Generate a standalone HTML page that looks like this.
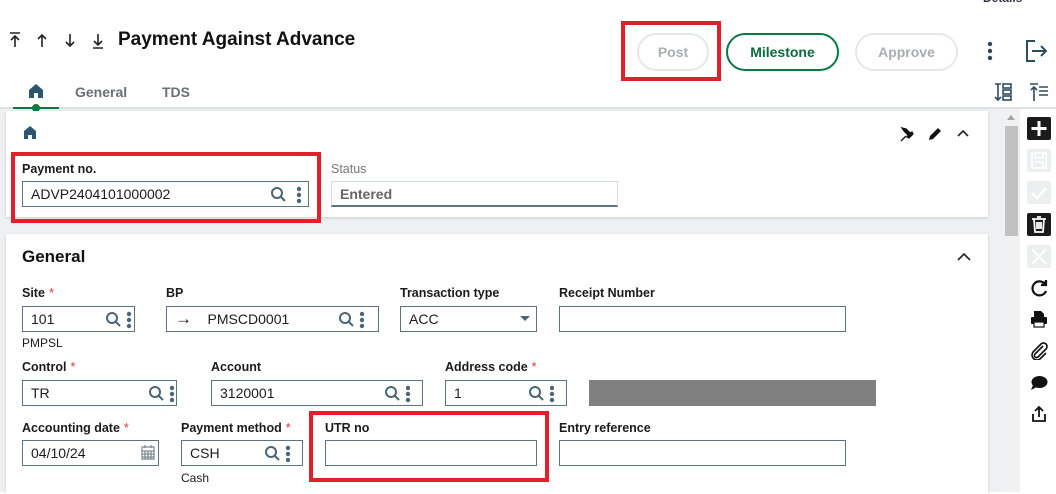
<!DOCTYPE html>
<html><head><meta charset="utf-8"><style>
*{margin:0;padding:0;box-sizing:border-box}
body{width:1056px;height:492px;overflow:hidden;position:relative;background:#fff;font-family:"Liberation Sans",sans-serif;color:#1b1b1b}
.a{position:absolute}
.lbl{position:absolute;font-size:12.5px;font-weight:bold;color:#1b1b1b;white-space:nowrap}
.lbl .s{color:#e0323c;font-weight:normal;margin-left:4px}
.inp{position:absolute;height:26px;border:1px solid #5b7383;background:#fff;font-size:14px;line-height:24px;padding-left:8px;color:#1b1b1b}
.ic{position:absolute;top:4px}
.red{position:absolute;border:4px solid #e3202a}
.btn{position:absolute;top:33px;height:38px;border-radius:19px;border:2px solid #e4e8eb;font-size:14px;font-weight:bold;color:#a9adb0;text-align:center;line-height:34px;background:#fff}
.tb{position:absolute;left:1027px;width:24px;height:23px;border-radius:2px}
</style></head><body>
<div class="a" style="left:0;top:109px;width:1020px;height:383px;background:#eef1f3"></div>
<div class="a" style="left:0;top:107px;width:1056px;height:2px;background:#dde1e4"></div>
<div class="a" style="left:983px;top:-9px;font-size:12px;font-weight:bold;color:#334">Details</div>
<svg class="a" style="left:8px;top:31px" width="100" height="18" fill="none" stroke="#222" stroke-width="1.6">
<path d="M2 2h10M7 16V5M3 9l4-4 4 4"/>
<path d="M34 16V4M30 8l4-4 4 4"/>
<path d="M62 3v12M58 11l4 4 4-4"/>
<path d="M90 3v11M86 10l4 4 4-4M85 17h10"/>
</svg>
<div class="a" style="left:118px;top:29px;font-size:19px;font-weight:bold;color:#111">Payment Against Advance</div>
<div class="btn" style="left:637px;width:72px">Post</div>
<div class="btn" style="left:726px;width:113px;border-color:#0a7a45;color:#0a6b3c">Milestone</div>
<div class="btn" style="left:855px;width:103px">Approve</div>
<div class="red" style="left:621px;top:21px;width:100px;height:60px"></div>
<svg class="a" style="left:986px;top:41px" width="8" height="20" fill="#2e4755"><circle cx="4" cy="3" r="2.2"/><circle cx="4" cy="10" r="2.2"/><circle cx="4" cy="17" r="2.2"/></svg>
<svg class="a" style="left:1024px;top:39px" width="24" height="24" fill="none" stroke="#2e4d5e" stroke-width="2"><path d="M11 2H3v20h8M8 12h14M17 7l5 5-5 5"/></svg>
<svg class="a" style="left:28px;top:83px" width="16" height="16" fill="#2e5570"><path d="M8 1L1 7v8h5v-5h4v5h5V7z"/></svg>
<div class="a" style="left:75px;top:84px;font-size:14px;font-weight:bold;color:#6b7076">General</div>
<div class="a" style="left:162px;top:84px;font-size:14px;font-weight:bold;color:#6b7076">TDS</div>
<div class="a" style="left:13px;top:107px;width:46px;height:2px;background:#0a7a45"></div>
<div class="a" style="left:32px;top:104px;width:8px;height:8px;border-radius:50%;background:#0a7a45"></div>
<svg class="a" style="left:993px;top:82px" width="20" height="20" fill="none" stroke="#2e4d5e" stroke-width="1.6"><path d="M2 2h6M5 2v16M2 15l3 3 3-3"/><rect x="10" y="2" width="8" height="4"/><rect x="10" y="8" width="8" height="4"/><rect x="10" y="14" width="8" height="4"/></svg>
<svg class="a" style="left:1029px;top:82px" width="20" height="20" fill="none" stroke="#2e4d5e" stroke-width="1.6"><path d="M1 2h8M5 5v14M2 8l3-3 3 3M10 5h9M10 9h9M10 13h9"/></svg>
<div class="a" style="left:6px;top:111px;width:982px;height:106px;background:#fff;box-shadow:0 1px 3px rgba(0,0,0,.15)"></div>
<svg class="a" style="left:23px;top:125px" width="14" height="15" fill="#2e5570"><path d="M7 1L1 6v8h4v-4h4v4h4V6z"/></svg>
<svg class="a" style="left:899px;top:125px" width="80" height="18" fill="#111"><path d="M3 3l4 1 4 4 2-1 1 2-4 4-2-1 1-2-4-4zM7 11l-5 5" stroke="#111" stroke-width="1.3"/><path d="M30 15l1-4 8-8 3 3-8 8z"/><path d="M59 11l5-5 5 5" fill="none" stroke="#222" stroke-width="1.6"/></svg>
<div class="lbl" style="left:22px;top:162px">Payment no.</div>
<div class="inp" style="left:22px;top:181px;width:287px">ADVP2404101000002
<svg class="ic" style="left:247px" width="36" height="18" fill="none" stroke="#4a6575" stroke-width="2"><circle cx="7" cy="7" r="5"/><path d="M11 11l4 4"/><circle cx="29" cy="3" r="1.2" fill="#4a6575"/><circle cx="29" cy="9" r="1.2" fill="#4a6575"/><circle cx="29" cy="15" r="1.2" fill="#4a6575"/></svg></div>
<div class="red" style="left:11px;top:152px;width:310px;height:71px"></div>
<div class="lbl" style="left:331px;top:162px;color:#777;font-weight:normal">Status</div>
<div class="inp" style="left:331px;top:181px;width:287px;border-color:#d5dade;border-bottom:2px solid #5b7383;color:#666;font-weight:bold;font-size:14px">Entered</div>
<div class="a" style="left:6px;top:234px;width:982px;height:260px;background:#fff;box-shadow:0 1px 3px rgba(0,0,0,.15)"></div>
<div class="a" style="left:22px;top:247px;font-size:17px;font-weight:bold;color:#111">General</div>
<svg class="a" style="left:957px;top:252px" width="14" height="10" fill="none" stroke="#222" stroke-width="1.6"><path d="M1 8l6-6 6 6"/></svg>

<div class="lbl" style="left:22px;top:286px">Site<span class="s">*</span></div>
<div class="inp" style="left:22px;top:306px;width:113px">101<svg class="ic" style="left:82px" width="30" height="18" fill="none" stroke="#4a6575" stroke-width="2"><circle cx="7" cy="7" r="5"/><path d="M11 11l4 4"/><circle cx="24" cy="3" r="1.2" fill="#4a6575"/><circle cx="24" cy="9" r="1.2" fill="#4a6575"/><circle cx="24" cy="15" r="1.2" fill="#4a6575"/></svg></div>
<div class="a" style="left:22px;top:336px;font-size:12px">PMPSL</div>
<div class="lbl" style="left:166px;top:286px">BP</div>
<div class="inp" style="left:166px;top:306px;width:213px"><span style="font-size:17px">→</span>&nbsp;&nbsp;&nbsp; PMSCD0001<svg class="ic" style="left:171px" width="30" height="18" fill="none" stroke="#4a6575" stroke-width="2"><circle cx="7" cy="7" r="5"/><path d="M11 11l4 4"/><circle cx="24" cy="3" r="1.2" fill="#4a6575"/><circle cx="24" cy="9" r="1.2" fill="#4a6575"/><circle cx="24" cy="15" r="1.2" fill="#4a6575"/></svg></div>
<div class="lbl" style="left:400px;top:286px">Transaction type</div>
<div class="inp" style="left:400px;top:306px;width:137px">ACC<svg class="ic" style="left:119px;top:9px" width="10" height="6" fill="#4a6575"><path d="M0 0h10L5 5z"/></svg></div>
<div class="lbl" style="left:559px;top:286px">Receipt Number</div>
<div class="inp" style="left:559px;top:306px;width:287px"></div>

<div class="lbl" style="left:22px;top:360px">Control<span class="s">*</span></div>
<div class="inp" style="left:22px;top:380px;width:155px">TR<svg class="ic" style="left:125px" width="30" height="18" fill="none" stroke="#4a6575" stroke-width="2"><circle cx="7" cy="7" r="5"/><path d="M11 11l4 4"/><circle cx="24" cy="3" r="1.2" fill="#4a6575"/><circle cx="24" cy="9" r="1.2" fill="#4a6575"/><circle cx="24" cy="15" r="1.2" fill="#4a6575"/></svg></div>
<div class="lbl" style="left:211px;top:360px">Account</div>
<div class="inp" style="left:211px;top:380px;width:212px">3120001<svg class="ic" style="left:172px" width="30" height="18" fill="none" stroke="#4a6575" stroke-width="2"><circle cx="7" cy="7" r="5"/><path d="M11 11l4 4"/><circle cx="24" cy="3" r="1.2" fill="#4a6575"/><circle cx="24" cy="9" r="1.2" fill="#4a6575"/><circle cx="24" cy="15" r="1.2" fill="#4a6575"/></svg></div>
<div class="lbl" style="left:445px;top:360px">Address code<span class="s">*</span></div>
<div class="inp" style="left:445px;top:380px;width:122px">1<svg class="ic" style="left:82px" width="30" height="18" fill="none" stroke="#4a6575" stroke-width="2"><circle cx="7" cy="7" r="5"/><path d="M11 11l4 4"/><circle cx="24" cy="3" r="1.2" fill="#4a6575"/><circle cx="24" cy="9" r="1.2" fill="#4a6575"/><circle cx="24" cy="15" r="1.2" fill="#4a6575"/></svg></div>
<div class="a" style="left:589px;top:380px;width:287px;height:26px;background:#808080"></div>

<div class="lbl" style="left:22px;top:421px">Accounting date<span class="s">*</span></div>
<div class="inp" style="left:22px;top:440px;width:137px">04/10/24<svg class="ic" style="left:118px" width="14" height="15" fill="none" stroke="#7d8d97" stroke-width="1.3"><rect x="1" y="2" width="12" height="12"/><path d="M1 6h12M1 9h12M1 12h12M4 6v8M7 6v8M10 6v8M4 0v3M10 0v3"/></svg></div>
<div class="lbl" style="left:181px;top:421px">Payment method<span class="s">*</span></div>
<div class="inp" style="left:181px;top:440px;width:122px">CSH<svg class="ic" style="left:82px" width="30" height="18" fill="none" stroke="#4a6575" stroke-width="2"><circle cx="7" cy="7" r="5"/><path d="M11 11l4 4"/><circle cx="24" cy="3" r="1.2" fill="#4a6575"/><circle cx="24" cy="9" r="1.2" fill="#4a6575"/><circle cx="24" cy="15" r="1.2" fill="#4a6575"/></svg></div>
<div class="a" style="left:181px;top:471px;font-size:12px">Cash</div>
<div class="lbl" style="left:325px;top:421px">UTR no</div>
<div class="inp" style="left:325px;top:440px;width:212px"></div>
<div class="red" style="left:309px;top:411px;width:240px;height:71px"></div>
<div class="lbl" style="left:559px;top:421px">Entry reference</div>
<div class="inp" style="left:559px;top:440px;width:287px"></div>

<div class="a" style="left:1004px;top:109px;width:16px;height:383px;background:#f1f1f1"></div>
<div class="a" style="left:1005px;top:126px;width:13px;height:110px;background:#c1c1c1"></div>
<svg class="a" style="left:1007px;top:115px" width="8" height="5" fill="#a3a3a3"><path d="M0 5L4 0l4 5z"/></svg>
<div class="a" style="left:1020px;top:109px;width:36px;height:383px;background:#fff"></div>
<div class="tb" style="top:117px;background:#1b1b1b"><svg width="24" height="23" stroke="#fff" stroke-width="3"><path d="M12 4v15M4.5 11.5h15"/></svg></div>
<div class="tb" style="top:149px;background:#eceeef"><svg width="24" height="23" fill="none" stroke="#fff" stroke-width="1.6"><rect x="5" y="4" width="14" height="15"/><path d="M8 4v5h8V4M8 13h8v6"/></svg></div>
<div class="tb" style="top:181px;background:#eceeef"><svg width="24" height="23" fill="none" stroke="#fff" stroke-width="2.5"><path d="M5 12l5 5 9-10"/></svg></div>
<div class="tb" style="top:213px;background:#1b1b1b"><svg width="24" height="23" fill="none" stroke="#fff" stroke-width="1.8"><path d="M5 6h14M10 4h4M7 6l1 13h8l1-13M10 9v7M12 9v7M14 9v7"/></svg></div>
<div class="tb" style="top:245px;background:#eceeef"><svg width="24" height="23" stroke="#fff" stroke-width="2"><path d="M5 4l14 15M19 4L5 19"/></svg></div>
<svg class="a" style="left:1029px;top:278px" width="20" height="20" fill="none" stroke="#111" stroke-width="2.2"><path d="M16 6A7 7 0 1 0 17 13"/><path d="M17 2v5h-5" fill="#111"/></svg>
<svg class="a" style="left:1030px;top:310px" width="18" height="18" fill="#111"><path d="M4 1h7l3 3v3H4z"/><rect x="1" y="7" width="16" height="7" rx="1"/><rect x="4" y="12" width="10" height="5" fill="#fff" stroke="#111" stroke-width="1.2"/></svg>
<svg class="a" style="left:1030px;top:342px" width="18" height="18" fill="none" stroke="#111" stroke-width="1.6"><path d="M13 4L5 12a2 2 0 0 0 3 3l8-8a3.5 3.5 0 0 0-5-5L3 10a5 5 0 0 0 7 7l6-6"/></svg>
<svg class="a" style="left:1030px;top:375px" width="18" height="16" fill="#111"><ellipse cx="9.5" cy="7" rx="8" ry="6"/><path d="M3 10l-2 5 6-3z"/></svg>
<svg class="a" style="left:1031px;top:405px" width="16" height="18" fill="none" stroke="#111" stroke-width="1.8"><path d="M8 12V2M4 6l4-4 4 4M2 9v7h12V9"/></svg>
</body></html>
